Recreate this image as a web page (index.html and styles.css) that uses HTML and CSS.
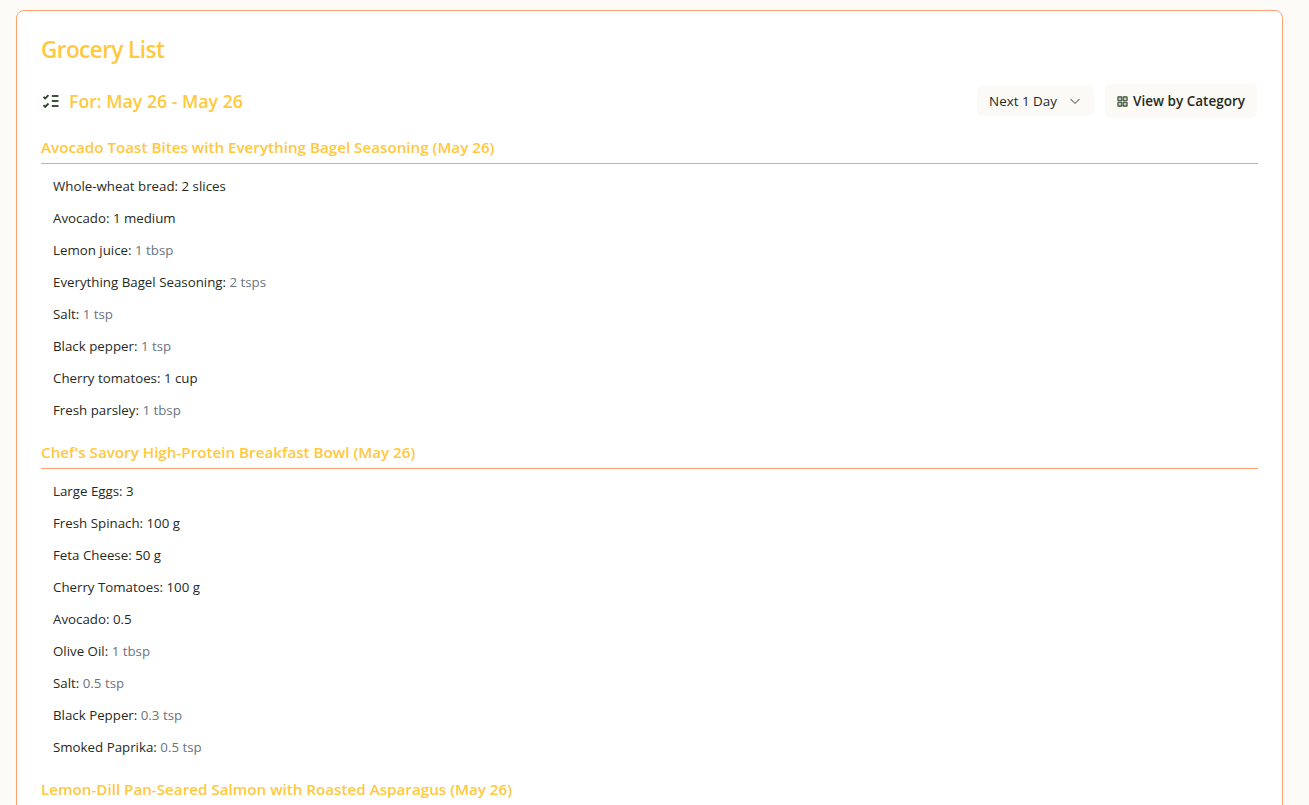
FILE: index.html
```html
<!DOCTYPE html>
<html lang="en">
<head>
<meta charset="utf-8">
<title>Grocery List</title>
<link rel="stylesheet" href="styles.css">
</head>
<body>
<main class="card">
  <h1 class="title">Grocery List</h1>
  <div class="toolbar">
    <div class="range">
      <svg class="list-icon" width="20" height="20" viewBox="0 0 24 24" fill="none" stroke="#2a4528" stroke-width="2.200"><path d="m3 17 2 2 4-4"/><path d="m3 7 2 2 4-4"/><path d="M13 6h8"/><path d="M13 12h8"/><path d="M13 18h8"/></svg>
      <h2 class="range-text">For: May 26 - May 26</h2>
    </div>
    <div class="actions">
      <div class="select"><span>Next 1 Day</span>
        <svg width="12" height="12" viewBox="0 0 12 12" fill="none" stroke="#7d8a78" stroke-width="1.2"><path d="M1.500 4l4.500 4.500L10.500 4"/></svg>
      </div>
      <button class="btn">
        <svg width="11" height="11" viewBox="0 0 24 24" fill="#c3cabf" stroke="#2f4a2c" stroke-width="2.400"><rect x="2" y="2" width="8.500" height="8.500" rx="1"/><rect x="13.500" y="2" width="8.500" height="8.500" rx="1"/><rect x="2" y="13.500" width="8.500" height="8.500" rx="1"/><rect x="13.500" y="13.500" width="8.500" height="8.500" rx="1"/></svg>
        View by Category
      </button>
    </div>
  </div>

  <section class="recipe">
    <h3 class="recipe-title">Avocado Toast Bites with Everything Bagel Seasoning (May 26)</h3>
    <ul class="items">
      <li>Whole-wheat bread: 2 slices</li>
      <li>Avocado: 1 medium</li>
      <li>Lemon juice: <span class="unit">1 tbsp</span></li>
      <li>Everything Bagel Seasoning: <span class="unit">2 tsps</span></li>
      <li>Salt: <span class="unit">1 tsp</span></li>
      <li>Black pepper: <span class="unit">1 tsp</span></li>
      <li>Cherry tomatoes: 1 cup</li>
      <li>Fresh parsley: <span class="unit">1 tbsp</span></li>
    </ul>
  </section>

  <section class="recipe">
    <h3 class="recipe-title">Chef's Savory High-Protein Breakfast Bowl (May 26)</h3>
    <ul class="items">
      <li>Large Eggs: 3</li>
      <li>Fresh Spinach: 100 g</li>
      <li>Feta Cheese: 50 g</li>
      <li>Cherry Tomatoes: 100 g</li>
      <li>Avocado: 0.5</li>
      <li>Olive Oil: <span class="unit">1 tbsp</span></li>
      <li>Salt: <span class="unit">0.5 tsp</span></li>
      <li>Black Pepper: <span class="unit">0.3 tsp</span></li>
      <li>Smoked Paprika: <span class="unit">0.5 tsp</span></li>
    </ul>
  </section>

  <section class="recipe">
    <h3 class="recipe-title">Lemon-Dill Pan-Seared Salmon with Roasted Asparagus (May 26)</h3>
  </section>
</main>
</body>
</html>
```
FILE: styles.css
```css
* { box-sizing: border-box; }
html, body { height: 100%; overflow: hidden; }
body {
  margin: 0;
  padding: 10px 26px 0 16px;
  background: #fdfbf7;
  font-family: "Open Sans", "Noto Sans", sans-serif;
  color: #1f2a1c;
}
.card {
  background: #fff;
  border: 1px solid #ffa06e;
  border-radius: 8px;
  padding: 24px;
  min-height: 1000px;
}
.title {
  margin: 0;
  font-size: 22.500px;
  letter-spacing: -0.550px;
  line-height: 29px;
  font-weight: 600;
  color: #ffc83d;
}
.toolbar {
  display: flex;
  justify-content: space-between;
  align-items: center;
  margin-top: 20px;
  padding-bottom: 3px;
}
.range { display: flex; align-items: center; gap: 8px; }
.range-text {
  margin: 0;
  font-size: 17.700px;
  line-height: 24px;
  font-weight: 600;
  color: #ffc83d;
}
.actions { display: flex; align-items: center; gap: 11px; padding-right: 1px; }
.select {
  display: flex;
  align-items: center;
  justify-content: space-between;
  width: 117px;
  height: 30px;
  padding: 0 13px 0 12px;
  background: #fcfaf6;
  border-radius: 6px;
  font-size: 13.400px;
}
.btn {
  display: flex;
  align-items: center;
  gap: 5px;
  height: 34px;
  padding: 0 12px;
  border: 0;
  background: #fcfaf6;
  border-radius: 6px;
  font: 600 13.500px "Open Sans", "Noto Sans", sans-serif;
  color: #1f2a1c;
}
.recipe { margin-top: 14px; }
.recipe-title {
  margin: 0;
  padding-bottom: 4px;
  border-bottom: 1px solid #ffa06e;
  font-size: 15.200px;
  line-height: 24px;
  font-weight: 600;
  color: #ffc83d;
}
.items { list-style: none; margin: 6px 0 0; padding: 0 0 0 12px; }
.items li { font-size: 13.300px; line-height: 20px; padding: 6px 0; }
.unit { color: #6b7480; }
```
